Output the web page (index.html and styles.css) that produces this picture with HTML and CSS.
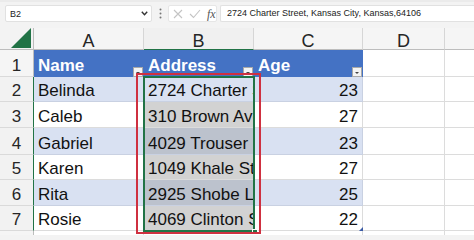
FILE: index.html
```html
<!DOCTYPE html>
<html>
<head>
<meta charset="utf-8">
<link rel="stylesheet" href="styles.css">
</head>
<body>
<div class="app">
  <div class="fbar">
    <div class="namebox">
      <span>B2</span>
      <svg class="chev" width="7" height="5" viewBox="0 0 7 5"><path d="M0.8 0.8 L3.5 3.8 L6.2 0.8" fill="none" stroke="#333" stroke-width="1.4"/></svg>
    </div>
    <div class="dots">
      <svg width="3" height="11" viewBox="0 0 3 11"><circle cx="1.5" cy="1.5" r="1" fill="#777"/><circle cx="1.5" cy="5.5" r="1" fill="#777"/><circle cx="1.5" cy="9.5" r="1" fill="#777"/></svg>
    </div>
    <div class="fxbox">
      <svg width="10" height="10" viewBox="0 0 10 10"><path d="M1 1 L9 9 M9 1 L1 9" stroke="#c4c4c4" stroke-width="1.1" fill="none"/></svg>
      <svg width="12" height="10" viewBox="0 0 12 10"><path d="M1 5 L4.5 8.5 L11 1" stroke="#c4c4c4" stroke-width="1.1" fill="none"/></svg>
      <span class="fx">fx</span>
    </div>
    <div class="formula">2724 Charter Street, Kansas City, Kansas,64106</div>
  </div>

  <div class="sheet">
    <div class="corner"><svg width="20" height="20" viewBox="0 0 20 20"><polygon points="20,0 20,20 0,20" fill="#217346"/></svg></div>
    <div class="colh">A</div>
    <div class="colh sel">B</div>
    <div class="colh">C</div>
    <div class="colh">D</div>
    <div class="colh"></div>

    <div class="rowh">1</div>
    <div class="c th"><span>Name</span><i class="flt"></i></div>
    <div class="c th"><span>Address</span><i class="flt"></i></div>
    <div class="c th"><span>Age</span><i class="flt"></i></div>
    <div class="c"></div>
    <div class="c"></div>

    <div class="rowh rsel">2</div>
    <div class="c band">Belinda</div>
    <div class="c band">2724 Charter Street, Kansas City, Kansas,64106</div>
    <div class="c band num">23</div>
    <div class="c"></div>
    <div class="c"></div>

    <div class="rowh rsel">3</div>
    <div class="c">Caleb</div>
    <div class="c bsel">310 Brown Avenue</div>
    <div class="c num">27</div>
    <div class="c"></div>
    <div class="c"></div>

    <div class="rowh rsel">4</div>
    <div class="c band">Gabriel</div>
    <div class="c band bsel">4029 Trouser Street</div>
    <div class="c band num">23</div>
    <div class="c"></div>
    <div class="c"></div>

    <div class="rowh rsel">5</div>
    <div class="c">Karen</div>
    <div class="c bsel">1049 Khale Street</div>
    <div class="c num">27</div>
    <div class="c"></div>
    <div class="c"></div>

    <div class="rowh rsel">6</div>
    <div class="c band">Rita</div>
    <div class="c band bsel">2925 Shobe Lane</div>
    <div class="c band num">25</div>
    <div class="c"></div>
    <div class="c"></div>

    <div class="rowh rsel">7</div>
    <div class="c">Rosie</div>
    <div class="c bsel">4069 Clinton Street</div>
    <div class="c num">22</div>
    <div class="c"></div>
    <div class="c"></div>

    <div class="rowh">8</div>
    <div class="c"></div>
    <div class="c"></div>
    <div class="c"></div>
    <div class="c"></div>
    <div class="c"></div>

    <div class="selbox"><i class="handle"></i></div>
    <div class="tblhandle"></div>
    <div class="redbox"></div>
  </div>
</div>
</body>
</html>
```

FILE: styles.css
```css
html, body {
  margin: 0;
  padding: 0;
}
body {
  width: 474px;
  height: 235px;
  overflow: hidden;
  background: #f3f3f3;
  font-family: "Liberation Sans", Arial, sans-serif;
}
.app {
  width: 474px;
  height: 235px;
  overflow: hidden;
}
.fbar {
  height: 28px;
  box-sizing: border-box;
  padding-left: 5px;
  display: flex;
  align-items: flex-start;
  border-top: 2px solid #ebebeb;
  padding-top: 3px;
}
.namebox {
  width: 147px;
  height: 17px;
  box-sizing: border-box;
  background: #fff;
  border: 1px solid #e1e1e1;
  border-radius: 2px;
  display: flex;
  align-items: center;
  justify-content: space-between;
  padding: 0 3px 0 4px;
  font-size: 9px;
  color: #222;
}
.chev {
  display: block;
}
.dots {
  width: 16px;
  height: 17px;
  display: flex;
  align-items: center;
  justify-content: center;
}
.dots svg { display: block; }
.fxbox {
  width: 49px;
  height: 17px;
  box-sizing: border-box;
  background: #fff;
  border: 1px solid #e6e6e6;
  border-radius: 2px;
  display: flex;
  align-items: center;
  padding-left: 4px;
  gap: 6px;
}
.fxbox svg { display: block; }
.fx {
  font-family: "Liberation Serif", "Times New Roman", serif;
  font-style: italic;
  font-size: 12px;
  color: #555;
  line-height: 12px;
}
.formula {
  margin-left: 3px;
  flex: 1;
  height: 17px;
  box-sizing: border-box;
  background: #fff;
  border: 1px solid #e1e1e1;
  border-right: none;
  border-radius: 2px 0 0 2px;
  font-size: 9px;
  color: #222;
  padding-left: 6px;
  line-height: 15px;
  white-space: nowrap;
  overflow: hidden;
}

.sheet {
  position: relative;
  display: grid;
  grid-template-columns: 34px 110px 110px 109px 82px 82px;
  grid-template-rows: 22px 27px 25px 26px 27px 25px 26px 25px 26px;
  background: #fff;
}
.corner {
  background: #f3f3f3;
  border-right: 1px solid #bdbdbd;
  border-bottom: 1px solid #bdbdbd;
  box-sizing: border-box;
  display: flex;
  align-items: flex-end;
  justify-content: flex-end;
  padding: 0 2px 1px 0;
}
.corner svg { display: block; }
.colh {
  background: #f5f5f5;
  border-right: 1px solid #d6d6d6;
  border-bottom: 1px solid #bdbdbd;
  box-sizing: border-box;
  text-align: center;
  font-size: 18px;
  line-height: 18px;
  padding-top: 4px;
  color: #262626;
}
.colh.sel {
  background: #f0f0f0;
  border-bottom: 1px solid #217346;
}
.rowh {
  background: #f5f5f5;
  border-right: 1px solid #bdbdbd;
  border-bottom: 1px solid #dadada;
  box-sizing: border-box;
  display: flex;
  align-items: flex-end;
  justify-content: center;
  font-size: 17px;
  line-height: 20px;
  color: #262626;
}
.rowh.rsel {
  background: #f2f2f2;
  border-right: 1px solid #217346;
}
.c {
  box-sizing: border-box;
  border-right: 1px solid #dcdcdc;
  border-bottom: 1px solid #dcdcdc;
  display: flex;
  align-items: flex-end;
  font-size: 17px;
  line-height: 20px;
  padding: 0 4px 0 4px;
  white-space: nowrap;
  overflow: hidden;
  color: #111;
}
.c.th {
  background: #4472c4;
  border-color: #4472c4;
  color: #fff;
  font-weight: bold;
  justify-content: space-between;
  padding-right: 0;
  overflow: visible;
}
.flt {
  display: block;
  width: 10px;
  height: 10px;
  box-sizing: border-box;
  background: #f4f4f4;
  border: 1px solid #a9a9a9;
  margin: 0 0 -1px 0;
  position: relative;
  flex: none;
}
.flt::after {
  content: "";
  position: absolute;
  left: 2px;
  top: 4px;
  border-left: 2px solid transparent;
  border-right: 2px solid transparent;
  border-top: 2px solid #444;
}
.c.band {
  background: #d9e1f2;
  border-bottom-color: #c9d1e2;
  border-right-color: #c9d1e2;
}
.c.bsel {
  background: #d2d2d2;
}
.c.band.bsel {
  background: #bcc2cd;
}
.c.num {
  justify-content: flex-end;
}

.selbox {
  position: absolute;
  left: 143px;
  top: 48px;
  width: 112px;
  height: 156px;
  box-sizing: border-box;
  border: 2px solid #217346;
  pointer-events: none;
}
.handle {
  position: absolute;
  right: -5px;
  bottom: -5px;
  width: 6px;
  height: 6px;
  box-sizing: border-box;
  background: #217346;
  border: 1px solid #fff;
}
.tblhandle {
  position: absolute;
  left: 359px;
  top: 199px;
  width: 0;
  height: 0;
  border-left: 4px solid transparent;
  border-bottom: 4px solid #3b5ba5;
}
.redbox {
  position: absolute;
  left: 136px;
  top: 45px;
  width: 125px;
  height: 161px;
  box-sizing: border-box;
  border: 2px solid #cf3040;
  pointer-events: none;
}
```
